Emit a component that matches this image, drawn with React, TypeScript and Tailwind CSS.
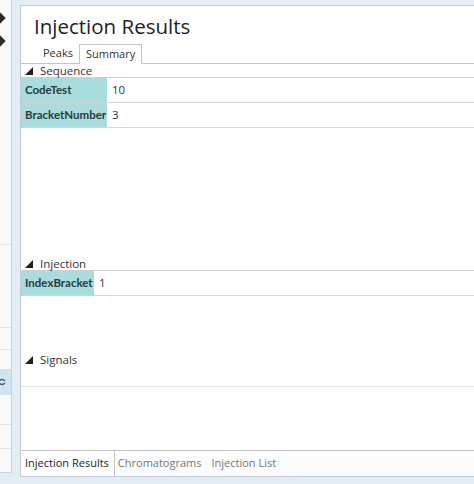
import React from "react";

const font = { fontFamily: '"Open Sans", "Noto Sans", sans-serif' };
const boldFont = { fontFamily: 'Lato, "Open Sans", sans-serif' };

const Triangle = () => (
  <svg width="8" height="8" viewBox="0 0 8 8" className="shrink-0">
    <polygon points="8,0 8,8 0,8" fill="#1f1f1f" />
  </svg>
);

const SectionHeader = ({ title }: { title: string }) => (
  <div className="flex h-[14px] items-center gap-[7px] border-b border-[#cfcfcf] pl-[4px]">
    <Triangle />
    <span className="text-[11.5px] leading-none text-[#333]">{title}</span>
  </div>
);

const Row = ({ label, value, w }: { label: string; value: string; w: string }) => (
  <div className="flex h-[25px] items-stretch border-b border-[#d4d4d4]">
    <div
      className={`${w} flex items-center bg-[#a9dcdd] pl-[4px] text-[11.5px] font-bold text-[#2a3a3a]`}
      style={boldFont}
    >
      {label}
    </div>
    <div className="flex items-center pl-[5px] text-[11.5px] text-[#333]">{value}</div>
  </div>
);

const LeftStrip = () => (
  <div className="flex h-[473px] w-[12px] flex-col border-r border-b border-[#c9d3dc] bg-[#f7f9fb]">
    <div className="h-[14px]" />
    <div className="h-[8px] w-[8px] -ml-[4px] rotate-45 bg-[#2b2b2b]" />
    <div className="h-[15px]" />
    <div className="h-[8px] w-[8px] -ml-[4px] rotate-45 bg-[#2b2b2b]" />
    <div className="h-[200px] border-b border-[#dde3e8]" />
    <div className="h-[83px] border-b border-[#dde3e8]" />
    <div className="h-[22px] border-b border-[#dde3e8]" />
    <div className="h-[19px]" />
    <div className="flex h-[26px] items-center bg-[#cfe4f3]">
      <svg width="7" height="8" viewBox="0 0 7 8" className="-ml-px">
        <path d="M0 3 Q3 0 6 3 M0 5 Q3 8 6 5" stroke="#4a5563" strokeWidth="1.2" fill="none" />
      </svg>
    </div>
    <div className="h-[30px] border-b border-[#dde3e8]" />
    <div className="h-[24px] border-b border-[#dde3e8]" />
  </div>
);

export default function App() {
  return (
    <div className="flex h-[484px] w-[474px] overflow-hidden bg-[#e3edf6]" style={font}>
      <LeftStrip />
      <div className="w-[8px] shrink-0" />
      <div className="mt-[5px] flex h-[472px] flex-1 flex-col border border-r-0 border-[#c3ccd4] bg-white">
        <div className="flex h-[37px] items-center pl-[13px] pt-[3px] text-[20.5px] text-[#1e1e1e]">
          Injection Results
        </div>
        <div className="flex h-[21px] items-end border-b border-[#c4c4c4] pl-[20px] text-[11px]">
          <div className="px-[2px] pb-[2px] text-[#333]">Peaks</div>
          <div className="-mb-px ml-[4px] flex h-[20px] items-center border border-b-0 border-[#c4c4c4] bg-white px-[6px] text-[#333]">
            Summary
          </div>
        </div>
        <SectionHeader title="Sequence" />
        <Row label="CodeTest" value="10" w="w-[86px]" />
        <Row label="BracketNumber" value="3" w="w-[86px]" />
        <div className="h-[129px]" />
        <SectionHeader title="Injection" />
        <Row label="IndexBracket" value="1" w="w-[73px]" />
        <div className="h-[56px]" />
        <div className="flex h-[16px] items-center gap-[7px] pl-[4px]">
          <Triangle />
          <span className="text-[11.5px] leading-none text-[#333]">Signals</span>
        </div>
        <div className="h-[19px] border-b border-[#e4e4e4]" />
        <div className="flex-1" />
        <div className="flex h-[26px] items-stretch text-[11px]">
          <div className="flex items-center border-t border-r border-[#c4c4c4] bg-white pl-[4px] pr-[5px] text-[#222]">
            Injection Results
          </div>
          <div className="flex flex-1 items-center gap-[10px] border-t border-[#c4c4c4] bg-[#fbfcfd] pl-[3px] text-[#777]">
            <span>Chromatograms</span>
            <span>Injection List</span>
          </div>
        </div>
      </div>
    </div>
  );
}
